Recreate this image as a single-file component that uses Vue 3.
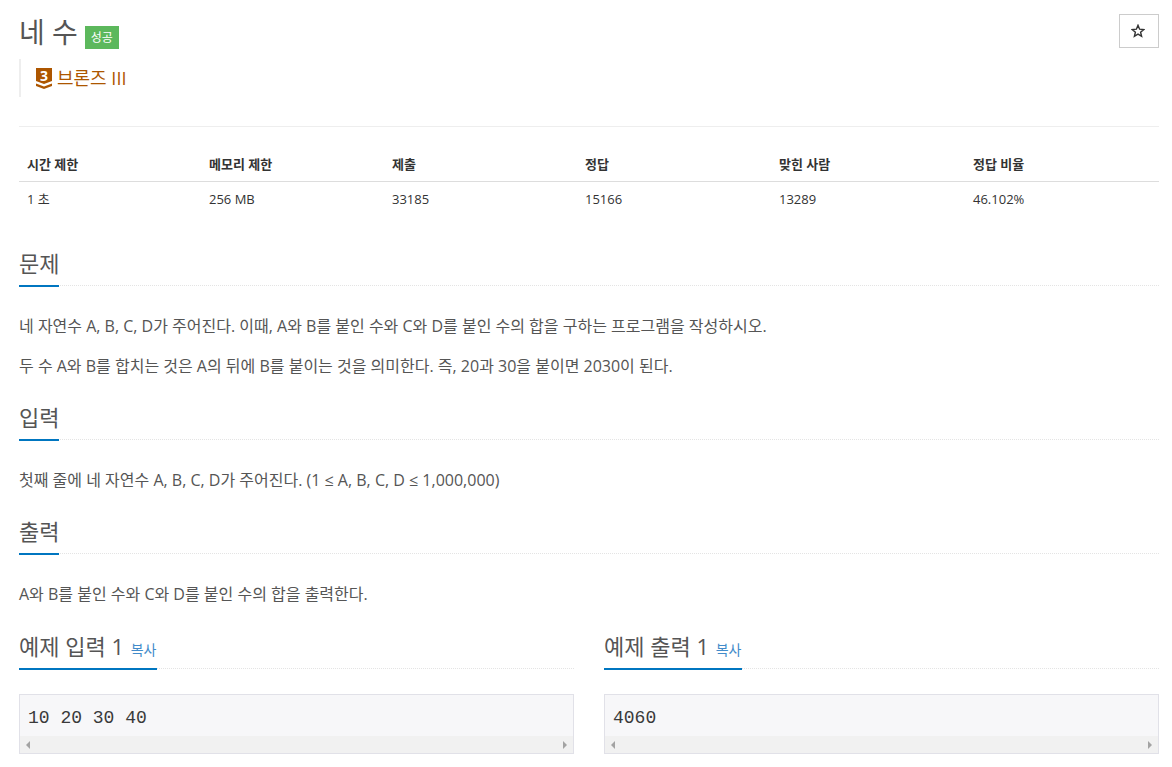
<script setup>
const heads = ['시간 제한', '메모리 제한', '제출', '정답', '맞힌 사람', '정답 비율']
const vals = ['1 초', '256 MB', '33185', '15166', '13289', '46.102%']
const samples = [
  { title: '예제 입력 1', data: '10 20 30 40' },
  { title: '예제 출력 1', data: '4060' }
]
</script>

<template>
  <div class="page">
    <header class="head">
      <div class="head-top">
        <div class="title-row">
          <h1 class="title">네 수</h1>
          <span class="badge">성공</span>
        </div>
        <button class="star" aria-label="즐겨찾기">
          <svg viewBox="0 0 14 14" width="14" height="14">
            <path d="M7 1.3L8.6 5.2L12.8 5.5L9.6 8.2L10.6 12.3L7 10.1L3.4 12.3L4.4 8.2L1.2 5.5L5.4 5.2Z" fill="none" stroke="#333" stroke-width="1.4" stroke-linejoin="miter" />
          </svg>
        </button>
      </div>
      <div class="tier">
        <svg class="tier-icon" viewBox="0 0 16 21" width="16" height="21">
          <path d="M0 0H16V13L8 16L0 13Z" fill="#ad5600" />
          <path d="M0 15.5L8 18.5L16 15.5V18L8 21L0 18Z" fill="#ad5600" />
          <text x="8" y="13" text-anchor="middle" class="tier-num">3</text>
        </svg>
        <span class="tier-name">브론즈 III</span>
      </div>
    </header>

    <div class="stats">
      <div v-for="h in heads" :key="h" class="th">{{ h }}</div>
      <div v-for="v in vals" :key="v" class="td">{{ v }}</div>
    </div>

    <section class="sec first">
      <div class="headline"><h2>문제</h2></div>
      <p class="para">네 자연수 A, B, C, D가 주어진다. 이때, A와 B를 붙인 수와 C와 D를 붙인 수의 합을 구하는 프로그램을 작성하시오.</p>
      <p class="para">두 수 A와 B를 합치는 것은 A의 뒤에 B를 붙이는 것을 의미한다. 즉, 20과 30을 붙이면 2030이 된다.</p>
    </section>

    <section class="sec">
      <div class="headline"><h2>입력</h2></div>
      <p class="para">첫째 줄에 네 자연수 A, B, C, D가 주어진다. (1 ≤ A, B, C, D ≤ 1,000,000)</p>
    </section>

    <section class="sec">
      <div class="headline"><h2>출력</h2></div>
      <p class="para">A와 B를 붙인 수와 C와 D를 붙인 수의 합을 출력한다.</p>
    </section>

    <div class="samples">
      <section v-for="s in samples" :key="s.title" class="sample">
        <div class="headline"><h2>{{ s.title }} <a class="copy">복사</a></h2></div>
        <div class="pre">
          <pre class="code">{{ s.data }}</pre>
          <div class="scroll">
            <span class="arrow left"></span>
            <span class="arrow right"></span>
          </div>
        </div>
      </section>
    </div>
  </div>
</template>

<style scoped>
.page {
  box-sizing: border-box;
  width: 1172px;
  height: 767px;
  overflow: hidden;
  padding: 0 13px 0 19px;
  font-family: "Open Sans", "Noto Sans CJK KR", sans-serif;
  font-size: 16px;
  color: #555;
}
.head {
  border-bottom: 1px solid #eee;
  height: 126px;
}
.head-top {
  display: flex;
  justify-content: space-between;
  height: 59px;
}
.title-row {
  display: flex;
  align-items: flex-start;
}
.title {
  margin: 10px 0 0;
  font-size: 28px;
  line-height: 44px;
  font-weight: 400;
  color: #555;
}
.badge {
  margin: 26px 0 0 7px;
  width: 34px;
  height: 23px;
  background: #5cb85c;
  color: #fff;
  font-size: 12px;
  font-weight: 400;
  line-height: 24px;
  text-align: center;
}
.star {
  margin-top: 14px;
  width: 40px;
  height: 34px;
  padding: 0 2px 0 0;
  background: #fff;
  border: 1px solid #ccc;
  display: flex;
  align-items: center;
  justify-content: center;
}
.tier {
  display: flex;
  align-items: center;
  gap: 5px;
  height: 38px;
  padding-left: 15px;
  border-left: 2px solid #eee;
  box-sizing: border-box;
}
.tier-icon {
  flex: none;
  overflow: visible;
}
.tier-num {
  fill: #fff;
  font-family: "Open Sans", sans-serif;
  font-size: 14px;
  font-weight: 700;
}
.tier-name {
  color: #ad5600;
  font-size: 18px;
  line-height: 36px;
  margin-bottom: 1px;
}
.stats {
  display: grid;
  grid-template-columns: 182px 183px 193px 194px 194px 194px;
  margin-top: 25px;
}
.th {
  height: 29px;
  border-bottom: 1px solid #ddd;
  padding-left: 8px;
  font-size: 13px;
  font-weight: 700;
  line-height: 24px;
  color: #333;
}
.td {
  padding-left: 8px;
  font-size: 13px;
  line-height: 35px;
  color: #333;
}
.sec {
  padding-top: 8px;
}
.sec.first {
  padding-top: 30px;
}
.headline {
  border-bottom: 1px dotted #e4e4e4;
  height: 38px;
}
.headline h2 {
  display: inline-block;
  box-sizing: border-box;
  height: 40px;
  margin: 0;
  border-bottom: 2px solid #0076c0;
  font-size: 22px;
  font-weight: 400;
  line-height: 32px;
  color: #555;
}
.copy {
  margin: 0 1px;
  font-size: 14px;
  color: #428bca;
}
.para {
  margin: 0 0 14px;
  font-size: 16px;
  line-height: 26px;
  color: #555;
}
.headline + .para {
  margin-top: 27px;
}
.samples {
  display: grid;
  grid-template-columns: 555px 555px;
  column-gap: 30px;
  padding-top: 9px;
}
.pre {
  margin-top: 25px;
  border: 1px solid #e1e1e8;
  background: #f7f7f9;
  height: 60px;
  box-sizing: border-box;
  display: flex;
  flex-direction: column;
}
.code {
  flex: 1;
  margin: 0;
  padding: 5px 0 0 8px;
  font-family: "Liberation Mono", monospace;
  font-size: 18px;
  line-height: 36px;
  color: #3a3a3a;
}
.scroll {
  height: 17px;
  background: #f1f1f1;
  display: flex;
  justify-content: space-between;
  align-items: center;
  padding: 0 6px;
}
.arrow {
  width: 0;
  height: 0;
  border-top: 4px solid transparent;
  border-bottom: 4px solid transparent;
}
.arrow.left {
  border-right: 4px solid #a3a3a3;
}
.arrow.right {
  border-left: 4px solid #a3a3a3;
}
</style>
